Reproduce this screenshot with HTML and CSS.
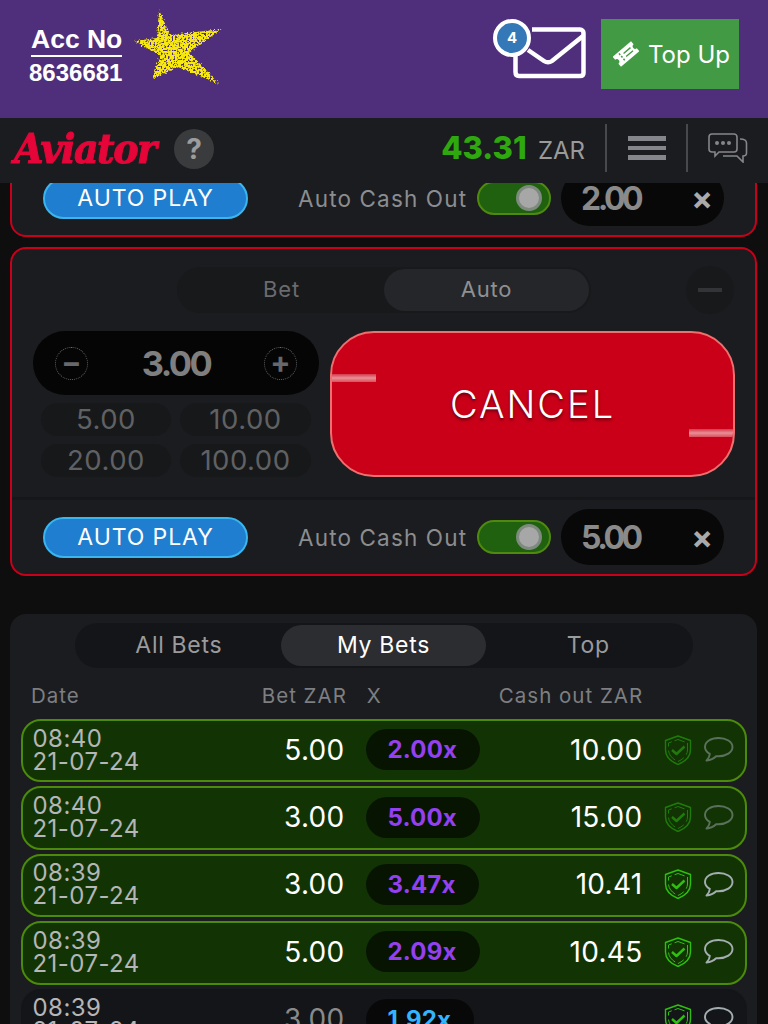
FILE: index.html
```html
<!DOCTYPE html>
<html lang="en">

<head>
    <meta charset="UTF-8">
    <meta name="viewport" content="width=device-width, initial-scale=1.0">
    <title>Aviator</title>

    <link rel="stylesheet" href="styles.css">
</head>

<body>
    <svg class="defs" width="0" height="0" aria-hidden="true">
        <defs>
            <symbol id="shield" viewBox="0 0 28 30">
                <path d="M14 1 L26.5 5.5 V15 C26.5 22 20 27 14 29.5 C8 27 1.5 22 1.5 15 V5.5 Z" fill="none" stroke="currentColor" stroke-width="1.4" stroke-linejoin="round" />
                <path d="M14 4.5 L23.5 8 V15 C23.5 20 19 24.5 14 26.5 C9 24.5 4.5 20 4.5 15 V8 Z" fill="none" stroke="currentColor" stroke-width="1" stroke-dasharray="7 3 12 4" />
                <path d="M8 15 L12.5 19 L20.5 11.5" fill="none" stroke="currentColor" stroke-width="2.4" stroke-linejoin="round" />
            </symbol>
            <symbol id="bubble" viewBox="0 0 32 28">
                <path d="M16 2 C8 2 2 6 2 11.5 C2 14.5 4 17 7 18.5 C7 20.5 6 23 3.5 25.5 C7.5 25 11 23.5 13.5 21 C14.3 21 15 21 16 21 C24 21 30.5 17 30.5 11.5 C30.5 6 24 2 16 2 Z" fill="none" stroke="currentColor" stroke-width="2" stroke-linejoin="round" />
            </symbol>
        </defs>
    </svg>

    <header class="banner">
        <div class="account">
            <div class="account-text">
                <div class="account-label">Acc No</div>
                <div class="account-number">8636681</div>
            </div>
            <svg class="star" width="94" height="78" viewBox="0 0 94 78">
                <defs>
                    <filter id="rough" x="-10%" y="-10%" width="120%" height="120%" color-interpolation-filters="sRGB">
                        <feTurbulence type="fractalNoise" baseFrequency="0.55" numOctaves="2" seed="4" result="noise" />
                        <feDisplacementMap in="SourceGraphic" in2="noise" scale="5" xChannelSelector="R" yChannelSelector="G" result="shape" />
                        <feColorMatrix in="noise" type="matrix" values="0 0 0 0 0 0 0 0 0 0 0 0 0 0 0 0 0 0 9 -3" result="holes" />
                        <feComposite in="shape" in2="holes" operator="in" />
                    </filter>
                </defs>
                <path filter="url(#rough)" d="M27 2 L38 27 L90 21 L57 44 L87 76 L46 59 L20 71 L28 47 L2 33 L25 30 Z" fill="#f7e90f" />
            </svg>
        </div>
        <div class="banner-actions">
            <div class="mail">
                <svg width="74" height="54" viewBox="0 0 74 54">
                    <path d="M3.500 25 V46 C3.500 49 5 50 7 50 H68 C70 50 71.500 49 71.500 47 V7 C71.500 5 70 3.500 68 3.500 H20" fill="none" stroke="#fff" stroke-width="4.500" />
                    <path d="M16 24 L32 35 C35 37 37 37 40 35 L71 10" fill="none" stroke="#fff" stroke-width="4.500" />
                </svg>
                <span class="mail-badge">4</span>
            </div>
            <button class="topup">
                <svg width="26" height="26" viewBox="0 0 26 26">
                    <g transform="rotate(-40 13 13)">
                        <path d="M1 6.500 H25 V10.500 A2.500 2.500 0 0 0 25 15.500 V19.500 H1 V15.500 A2.500 2.500 0 0 0 1 10.500 Z" fill="#fff" />
                        <path d="M8 8 V18" stroke="#439a44" stroke-width="1.500" stroke-dasharray="2 1.500" />
                        <path d="M11.500 11 H20.500 M11.500 15 H20.500" stroke="#439a44" stroke-width="1.400" />
                    </g>
                </svg>
                Top Up
            </button>
        </div>
    </header>

    <nav class="game-bar">
        <div class="logo">Aviator</div>
        <div class="help">?</div>
        <div class="balance"><b>43.31</b> <span>ZAR</span></div>
        <div class="bar-sep"></div>
        <div class="burger"><i></i><i></i><i></i></div>
        <div class="bar-sep"></div>
        <svg class="chat" width="40" height="30" viewBox="0 0 40 30">
            <path d="M4 1 H26 C27.500 1 29 2.500 29 4 V16 C29 18 27.500 19 26 19 H11 L7 23 V19 H4 C2 19 1 18 1 16 V4 C1 2.500 2 1 4 1 Z" fill="none" stroke="#84868c" stroke-width="1.600" />
            <path d="M32 6 C36 6 38.500 7 38.500 10 V20 C38.500 22 37 23 35 23 V29 L29 23 H15" fill="none" stroke="#84868c" stroke-width="1.600" />
            <circle cx="9" cy="10" r="2" fill="#84868c" />
            <circle cx="15" cy="10" r="2" fill="#84868c" />
            <circle cx="21" cy="10" r="2" fill="#84868c" />
        </svg>
    </nav>

    <main class="content">
        <section class="bet-panel bet-panel-scrolled">
            <div class="bet-footer">
                <button class="auto-play">AUTO PLAY</button>
                <span class="cash-label">Auto Cash Out</span>
                <div class="switch"><i></i></div>
                <div class="cash-input"><b>2.00</b><span>&#215;</span></div>
            </div>
        </section>

        <section class="bet-panel">
            <div class="bet-body">
                <div class="bet-top">
                    <div class="mode-tabs">
                        <div class="mode-tab">Bet</div>
                        <div class="mode-tab mode-tab-on">Auto</div>
                    </div>
                    <div class="collapse"><i></i></div>
                </div>
                <div class="bet-controls">
                    <div class="amount">
                        <div class="stepper">
                            <span class="step">&#8722;</span>
                            <b>3.00</b>
                            <span class="step">+</span>
                        </div>
                        <div class="chips">
                            <div class="chip">5.00</div>
                            <div class="chip">10.00</div>
                            <div class="chip">20.00</div>
                            <div class="chip">100.00</div>
                        </div>
                    </div>
                    <button class="cancel">
                        CANCEL
                        <i class="glint glint-left"></i>
                        <i class="glint glint-right"></i>
                    </button>
                </div>
            </div>
            <div class="bet-footer">
                <button class="auto-play">AUTO PLAY</button>
                <span class="cash-label">Auto Cash Out</span>
                <div class="switch"><i></i></div>
                <div class="cash-input"><b>5.00</b><span>&#215;</span></div>
            </div>
        </section>

        <section class="history">
            <div class="history-tabs">
                <div class="history-tab">All Bets</div>
                <div class="history-tab history-tab-on">My Bets</div>
                <div class="history-tab">Top</div>
            </div>
            <div class="history-head">
                <span>Date</span>
                <span class="head-bet">Bet ZAR</span>
                <span class="head-x">X</span>
                <span class="head-cash">Cash out ZAR</span>
            </div>
            <div class="rows">
                <div class="row row-won">
                    <div class="date">08:40<br>21-07-24</div>
                    <div class="money">5.00</div>
                    <div><span class="mult mult-purple">2.00x</span></div>
                    <div class="money">10.00</div>
                    <div class="row-icons row-icons-dim">
                        <svg class="shield" width="28" height="30"><use href="#shield" /></svg>
                        <svg class="bubble" width="31" height="27"><use href="#bubble" /></svg>
                    </div>
                </div>
                <div class="row row-won">
                    <div class="date">08:40<br>21-07-24</div>
                    <div class="money">3.00</div>
                    <div><span class="mult mult-purple">5.00x</span></div>
                    <div class="money">15.00</div>
                    <div class="row-icons row-icons-dim">
                        <svg class="shield" width="28" height="30"><use href="#shield" /></svg>
                        <svg class="bubble" width="31" height="27"><use href="#bubble" /></svg>
                    </div>
                </div>
                <div class="row row-won">
                    <div class="date">08:39<br>21-07-24</div>
                    <div class="money">3.00</div>
                    <div><span class="mult mult-purple">3.47x</span></div>
                    <div class="money">10.41</div>
                    <div class="row-icons">
                        <svg class="shield" width="28" height="30"><use href="#shield" /></svg>
                        <svg class="bubble" width="31" height="27"><use href="#bubble" /></svg>
                    </div>
                </div>
                <div class="row row-won">
                    <div class="date">08:39<br>21-07-24</div>
                    <div class="money">5.00</div>
                    <div><span class="mult mult-purple">2.09x</span></div>
                    <div class="money">10.45</div>
                    <div class="row-icons">
                        <svg class="shield" width="28" height="30"><use href="#shield" /></svg>
                        <svg class="bubble" width="31" height="27"><use href="#bubble" /></svg>
                    </div>
                </div>
                <div class="row">
                    <div class="date">08:39<br>21-07-24</div>
                    <div class="money money-dim">3.00</div>
                    <div><span class="mult mult-blue">1.92x</span></div>
                    <div class="money"></div>
                    <div class="row-icons">
                        <svg class="shield" width="28" height="30"><use href="#shield" /></svg>
                        <svg class="bubble" width="31" height="27"><use href="#bubble" /></svg>
                    </div>
                </div>
            </div>
        </section>
    </main>
</body>

</html>
```

FILE: styles.css
```css
html,
body {
    padding: 0;
    margin: 0;
}

* {
    box-sizing: border-box;
}

body {
    width: 768px;
    height: 1024px;
    overflow: hidden;
    background-color: #0e0e0f;
    color: white;
    font-family: Inter, "Liberation Sans", sans-serif;
}

button {
    border: none;
    font-family: inherit;
    padding: 0;
}

.defs {
    position: absolute;
}

/* purple banner */
.banner {
    height: 118px;
    background-color: #4f2f7c;
    display: flex;
    justify-content: space-between;
    padding: 19px 29px 0 29px;
}

.account {
    display: flex;
    align-items: flex-start;
}

.account-text {
    width: 93px;
    margin-top: 7px;
    font-family: "Liberation Sans", sans-serif;
    font-weight: bold;
    text-align: right;
}

.account-label {
    font-size: 26.500px;
    line-height: 26px;
    border-bottom: 2px solid white;
    height: 31px;
    margin-left: 2px;
    white-space: nowrap;
}

.account-number {
    font-size: 24px;
    line-height: 32px;
}

.star {
    margin-left: 10px;
    margin-top: -11px;
}

.banner-actions {
    display: flex;
    align-items: flex-start;
    gap: 15px;
}

.mail {
    position: relative;
    margin-top: 7px;
}

.mail-badge {
    position: absolute;
    left: -19px;
    top: -7px;
    width: 38px;
    height: 38px;
    border-radius: 50%;
    border: 4px solid white;
    background-color: #3478b8;
    font-size: 15px;
    font-weight: bold;
    line-height: 30px;
    text-align: center;
}

.topup {
    width: 138px;
    height: 70px;
    background-color: #439a44;
    color: white;
    font-size: 24px;
    display: flex;
    align-items: center;
    justify-content: center;
    gap: 9px;
    padding-left: 3px;
}

/* game bar */
.game-bar {
    height: 65px;
    background-color: #1b1c1f;
    display: flex;
    align-items: center;
    padding: 0 20px 5px 12px;
}

.logo {
    width: 146px;
    padding-left: 2px;
    font-family: "DejaVu Serif", serif;
    font-style: italic;
    font-weight: bold;
    font-size: 38px;
    letter-spacing: -1.500px;
    white-space: nowrap;
    color: #e50539;
    -webkit-text-stroke: 1px #e50539;
    transform: scaleY(1.1);
}

.help {
    width: 40px;
    height: 40px;
    margin: 2px 0 0 16px;
    border-radius: 50%;
    background-color: #3a3b3d;
    color: #9c9c9c;
    font-size: 28px;
    font-weight: bold;
    line-height: 40px;
    text-align: center;
}

.balance {
    margin: 0 20px 2px auto;
    color: #9a9a9a;
    font-size: 24px;
}

.balance b {
    color: #2fa80f;
    font-size: 31px;
    font-weight: 800;
    margin-right: 4.500px;
}

.bar-sep {
    width: 2px;
    height: 48px;
    background-color: #48494c;
}

.burger {
    width: 38px;
    margin: 0 20px 0 21px;
    display: flex;
    flex-direction: column;
    gap: 5px;
}

.burger i {
    display: block;
    height: 4.500px;
    background-color: #84868c;
}

.chat {
    margin-left: 20px;
}

/* scrolling game area */
.content {
    height: 841px;
    overflow: hidden;
    padding: 0 11px 0 10px;
}

.bet-panel {
    border: 2px solid #c8001b;
    border-radius: 16px;
    background-color: #1b1c1f;
    margin-bottom: 10px;
}

.bet-panel-scrolled {
    margin-top: -27px;
}

.bet-body {
    height: 248px;
    padding: 18px 0 0 21px;
}

.bet-top {
    display: flex;
    align-items: center;
    height: 46px;
}

.mode-tabs {
    width: 414px;
    height: 46px;
    margin-left: 144px;
    padding: 2px;
    border-radius: 23px;
    background-color: #18191b;
    display: flex;
}

.mode-tab {
    flex: 1;
    border-radius: 21px;
    color: #6a6b6e;
    font-size: 22px;
    letter-spacing: 0.800px;
    line-height: 41px;
    text-align: center;
}

.mode-tab-on {
    background-color: #252629;
    color: #8f9092;
}

.collapse {
    width: 48px;
    height: 48px;
    flex: none;
    margin-left: 95px;
    border-radius: 50%;
    background-color: #18191b;
    display: flex;
    align-items: center;
    justify-content: center;
}

.collapse i {
    width: 24px;
    height: 4px;
    background-color: #333438;
}

.bet-controls {
    display: flex;
    gap: 11px;
    margin-top: 18px;
}

.amount {
    width: 286px;
}

.stepper {
    height: 64px;
    border-radius: 32px;
    background-color: #050505;
    padding: 0 22px;
    display: flex;
    align-items: center;
    justify-content: space-between;
    color: #7f7f7f;
}

.stepper b {
    font-size: 34.500px;
    letter-spacing: -2.500px;
}

.step {
    width: 33px;
    height: 33px;
    border-radius: 50%;
    border: 1px dotted #66686b;
    color: #66686b;
    font-size: 30px;
    font-weight: bold;
    line-height: 28px;
    text-align: center;
}

.chips {
    display: grid;
    grid-template-columns: 130px 131px;
    gap: 8px 9px;
    margin: 8px 0 0 8px;
}

.chip {
    height: 33px;
    border-radius: 17px;
    background-color: #17181a;
    color: #606163;
    font-size: 27.500px;
    letter-spacing: 0.500px;
    line-height: 33px;
    text-align: center;
}

.cancel {
    position: relative;
    width: 405px;
    height: 146px;
    overflow: hidden;
    border: 2px solid #ef6f6f;
    border-radius: 44px;
    background-color: #c90018;
    color: white;
    font-size: 38px;
    font-weight: 300;
    letter-spacing: 2px;
    text-shadow: 0 2px 3px rgba(0, 0, 0, 0.5);
}

.glint {
    position: absolute;
    height: 8px;
    width: 44px;
    background: linear-gradient(#d23a4c, #ea8f95 50%, #d8505e);
}

.glint-left {
    left: 0;
    top: 41px;
}

.glint-right {
    right: 0;
    top: 96px;
}

.bet-footer {
    height: 77px;
    border-top: 3px solid #161719;
    display: flex;
    align-items: center;
    padding: 0 31px 0 31px;
}

.auto-play {
    width: 205px;
    height: 41px;
    flex: none;
    border: 2px solid #3ab5ee;
    border-radius: 21px;
    background-color: #1f7ecf;
    color: white;
    font-size: 23px;
    letter-spacing: 0.900px;
}

.cash-label {
    margin-left: 50px;
    width: 179px;
    flex: none;
    color: #8c8d8f;
    font-size: 22.500px;
    letter-spacing: 1.150px;
    white-space: nowrap;
}

.switch {
    position: relative;
    width: 74px;
    height: 34px;
    flex: none;
    border: 2px solid #4f8a0f;
    border-radius: 17px;
    background-color: #20610f;
}

.switch i {
    position: absolute;
    right: 7px;
    top: 2px;
    width: 26px;
    height: 26px;
    border-radius: 50%;
    border: 3px solid #7f8a7f;
    background-color: #a7a7a7;
}

.cash-input {
    width: 163px;
    height: 56px;
    flex: none;
    margin-left: 10px;
    border-radius: 28px;
    background-color: #080808;
    color: #8a8a8a;
    padding: 0 11px 0 20px;
    display: flex;
    align-items: center;
    justify-content: space-between;
}

.cash-input b {
    font-size: 32px;
    letter-spacing: -3.500px;
}

.cash-input span {
    font-size: 32px;
    font-weight: bold;
    color: #aaa;
}

/* bet history */
.history {
    margin-top: 38px;
    border-radius: 16px;
    background-color: #1b1c1f;
    padding: 9px 10.500px 0 10.500px;
}

.history-tabs {
    width: 618px;
    height: 45px;
    margin-left: 54px;
    padding: 2px;
    border-radius: 23px;
    background-color: #141518;
    display: flex;
}

.history-tab {
    flex: 1;
    border-radius: 21px;
    color: #9a9b9d;
    font-size: 23px;
    letter-spacing: 0.700px;
    line-height: 41px;
    text-align: center;
}

.history-tab-on {
    background-color: #2c2d30;
    color: white;
}

.history-head {
    height: 51px;
    display: flex;
    align-items: center;
    padding: 4px 0 0 10.500px;
    color: #7d7f82;
    font-size: 20.500px;
    letter-spacing: 1px;
}

.head-bet {
    margin-left: 182px;
}

.head-x {
    margin-left: 20px;
}

.head-cash {
    margin-left: 117px;
}

.rows {
    display: flex;
    flex-direction: column;
    gap: 4px;
}

.row {
    height: 63.400px;
    flex: none;
    border: 2px solid #141518;
    border-radius: 20px;
    background-color: #141518;
    display: grid;
    grid-template-columns: 177px 134px 136px 162px auto;
    align-items: center;
    padding: 0 0 2px 10px;
}

.row-won {
    border-color: #4b8a0a;
    background-color: #123405;
}

.date {
    color: #b4b6b8;
    font-size: 24px;
    letter-spacing: 0.450px;
    line-height: 23px;
}

.money {
    font-size: 28px;
    letter-spacing: 0.300px;
    text-align: right;
    margin-right: -1px;
}

.money-dim {
    color: #8a8a8a;
}

.mult {
    display: inline-block;
    height: 41px;
    margin-left: 22px;
    padding: 0 23px 0 22px;
    border-radius: 21px;
    background-color: rgba(0, 0, 0, 0.6);
    font-size: 24px;
    letter-spacing: 0.200px;
    font-weight: bold;
    line-height: 41px;
}

.mult-purple {
    color: #9340f0;
}

.mult-blue {
    color: #34b4ff;
}

.row-icons {
    display: flex;
    align-items: center;
    gap: 11px;
    margin-left: 22px;
}

.shield {
    color: #2fc00f;
}

.bubble {
    color: #a4adb0;
}

.row-icons-dim {
    opacity: 0.5;
}
```
